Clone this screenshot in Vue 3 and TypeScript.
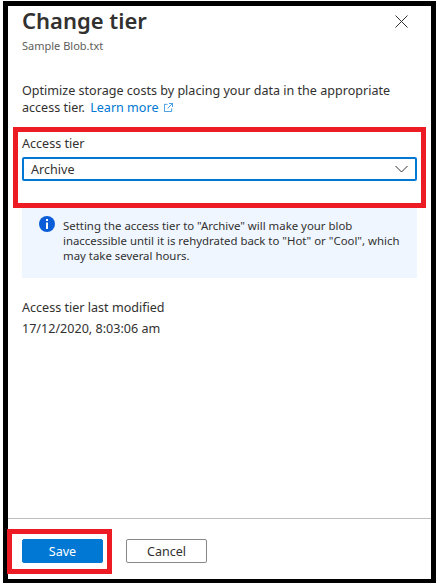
<template>
  <div class="page">
    <div class="frame">
      <main class="panel">
        <header class="head">
          <div>
            <h1 class="title">Change tier</h1>
            <div class="subtitle">Sample Blob.txt</div>
          </div>
          <button class="close" aria-label="Close">
            <svg width="13" height="13" viewBox="0 0 13 13">
              <path d="M.5.5l12 12M12.5.5l-12 12" stroke="#323130" stroke-width="1" fill="none" />
            </svg>
          </button>
        </header>

        <p class="intro">
          Optimize storage costs by placing your data in the appropriate access tier.
          <a class="link">Learn more<svg class="ext" width="9" height="9" viewBox="0 0 10 10">
              <path d="M4 1.5H.5v8h8V6M5.5.5h4v4M9.5.5L4 6" stroke="#0078d4" stroke-width=".8" fill="none" />
            </svg></a>
        </p>

        <label class="field-label">Access tier</label>
        <div class="select">
          <span>Archive</span>
          <svg width="13" height="8" viewBox="0 0 13 8">
            <path d="M.5 1l6 6 6-6" stroke="#323130" stroke-width="1" fill="none" />
          </svg>
        </div>

        <div class="info">
          <svg class="info-icon" width="16" height="16" viewBox="0 0 16 16">
            <circle cx="8" cy="8" r="8" fill="#0b5ed7" />
            <rect x="7" y="3" width="2" height="2" fill="#fff" />
            <rect x="7" y="6.5" width="2" height="6.5" fill="#fff" />
          </svg>
          <span class="info-text">Setting the access tier to "Archive" will make your blob inaccessible until it is rehydrated back to "Hot" or "Cool", which may take several hours.</span>
        </div>

        <div class="meta-label">Access tier last modified</div>
        <div class="meta-value">17/12/2020, 8:03:06 am</div>
      </main>

      <footer class="foot">
        <button class="btn primary">Save</button>
        <button class="btn">Cancel</button>
      </footer>
    </div>

    <div class="mark mark-tier"></div>
    <div class="mark mark-save"></div>
  </div>
</template>

<script setup lang="ts">
</script>

<style>
html, body {
  margin: 0;
  background: #fff;
}
</style>

<style scoped>
.page {
  position: relative;
  width: 437px;
  height: 583px;
  overflow: hidden;
  background: #fff;
  color: #323130;
  font-family: "Noto Sans", "Open Sans", sans-serif;
  font-size: 12.57px;
}

.frame {
  box-sizing: border-box;
  width: 433px;
  height: 582px;
  margin: 1px 0 0 3px;
  border: 5px solid #000;
  border-bottom-width: 4px;
  display: flex;
  flex-direction: column;
  background: #fff;
}

.panel {
  flex: 1;
  padding: 0 14px;
}

.head {
  display: flex;
  justify-content: space-between;
  align-items: flex-start;
}

.title {
  margin: 0;
  font-size: 22px;
  line-height: 28px;
  font-weight: 600;
}

.subtitle {
  margin-top: 4px;
  font-size: 11px;
  line-height: 15px;
  color: #605e5c;
}

.close {
  margin: 9px 9px 0 0;
  padding: 0;
  border: 0;
  background: none;
  line-height: 0;
}

.intro {
  margin: 29px 0 0;
  line-height: 17px;
}

.link {
  margin-left: 2px;
  color: #0078d4;
}

.ext {
  margin-left: 6px;
}

.field-label {
  display: block;
  margin-top: 19px;
  line-height: 18px;
}

.select {
  box-sizing: border-box;
  height: 24px;
  margin-top: 4px;
  padding: 0 7px;
  display: flex;
  align-items: center;
  justify-content: space-between;
  border: 2px solid #0078d4;
  border-radius: 2px;
}

.info {
  box-sizing: border-box;
  height: 71px;
  margin-top: 26px;
  padding: 9px 12px 0 17px;
  display: flex;
  gap: 8px;
  background: #eff6ff;
  font-size: 11.4px;
  line-height: 15px;
}

.info-icon {
  flex: none;
}

.info-text {
  margin-top: 2px;
}

.meta-label {
  margin-top: 21px;
  line-height: 18px;
}

.meta-value {
  margin-top: 3px;
  line-height: 18px;
}

.foot {
  height: 61px;
  padding: 20px 0 0 14px;
  box-sizing: border-box;
  display: flex;
  align-items: flex-start;
  gap: 23px;
  border-top: 1px solid #bdbdbd;
}

.btn {
  box-sizing: border-box;
  width: 81px;
  height: 24px;
  padding: 0;
  border: 1px solid #8a8886;
  border-radius: 2px;
  background: #fff;
  color: #323130;
  font: inherit;
}

.primary {
  border-color: #0078d4;
  background: #0078d4;
  color: #fff;
}

/* red annotation boxes drawn over the screenshot */
.mark {
  position: absolute;
  box-sizing: border-box;
  border: 5px solid #ed1c24;
}

.mark-tier {
  left: 13px;
  top: 127px;
  width: 413px;
  height: 81px;
}

.mark-save {
  left: 7px;
  top: 529px;
  width: 105px;
  height: 45px;
}
</style>
